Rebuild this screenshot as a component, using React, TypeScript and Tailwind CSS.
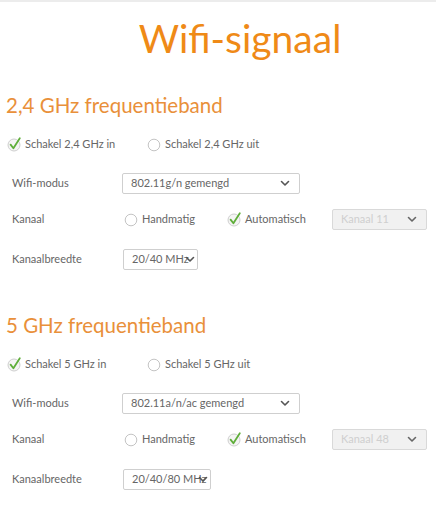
import { ReactNode } from "react";

function CheckIcon() {
  return (
    <svg width="16" height="16" viewBox="0 0 16 16" className="shrink-0">
      <circle cx="7" cy="9" r="6" fill="#f4f4f4" stroke="#cfcfcf" strokeWidth="1" />
      <path d="M3.6 8.6 L6.4 12.2 L12.8 2.2" fill="none" stroke="#5fae3a" strokeWidth="1.8" strokeLinecap="round" strokeLinejoin="round" />
    </svg>
  );
}

function RadioIcon() {
  return (
    <svg width="16" height="16" viewBox="0 0 16 16" className="shrink-0">
      <circle cx="7" cy="9" r="5.8" fill="#fff" stroke="#c4c4c4" strokeWidth="1" />
    </svg>
  );
}

function Chevron({ color = "#555" }: { color?: string }) {
  return (
    <svg width="10" height="7" viewBox="0 0 10 7" className="shrink-0">
      <path d="M1.5 1.5 L5 5 L8.5 1.5" fill="none" stroke={color} strokeWidth="1.6" strokeLinecap="round" strokeLinejoin="round" />
    </svg>
  );
}

function Option({ on, label, className = "" }: { on: boolean; label: string; className?: string }) {
  return (
    <div className={`flex items-center gap-[2px] ${className}`}>
      {on ? <CheckIcon /> : <RadioIcon />}
      <span>{label}</span>
    </div>
  );
}

// chevron sits over the text, like a native select that is too narrow
function Select({ value, width, disabled = false, tight = false }: { value: string; width: string; disabled?: boolean; tight?: boolean }) {
  return (
    <div
      className={`relative flex h-[21px] items-center overflow-hidden rounded-[2px] border pl-[8px] ${
        disabled ? "border-[#d9d9d9] bg-[#f1f1f1] text-[#cfcfcf]" : "border-[#cfcfcf] bg-white text-[#666]"
      } ${width}`}
    >
      <span className="whitespace-nowrap">{value}</span>
      <div className={`absolute top-[6px] ${tight ? "right-[2px]" : "right-[9px]"}`}>
        <Chevron color={disabled ? "#666" : "#555"} />
      </div>
    </div>
  );
}

function Row({ label, children, className = "" }: { label: string; children: ReactNode; className?: string }) {
  return (
    <div className={`flex h-[36px] items-center ${className}`}>
      <span className="w-[110px] shrink-0 pl-[12px]">{label}</span>
      {children}
    </div>
  );
}

function Band(props: { title: string; ghz: string; mode: string; channel: string; width: string; widthBox: string; className?: string }) {
  return (
    <section className={props.className}>
      <h2 className="pl-[6px] text-[20.5px] leading-[24px] text-[#e9903a]">{props.title}</h2>
      <div className="mt-[9px] flex h-[36px] items-center">
        <Option on label={`Schakel ${props.ghz} GHz in`} className="ml-[7px] w-[140px]" />
        <Option on={false} label={`Schakel ${props.ghz} GHz uit`} />
      </div>
      <Row label="Wifi-modus" className="mt-[3px]">
        <div className="ml-[12px]">
          <Select value={props.mode} width="w-[178px]" />
        </div>
      </Row>
      <Row label="Kanaal">
        <Option on={false} label="Handmatig" className="ml-[14px] w-[103px]" />
        <Option on label="Automatisch" className="w-[105px]" />
        <Select value={props.channel} width="w-[95px]" disabled />
      </Row>
      <Row label="Kanaalbreedte" className="mt-[4px]">
        <div className="ml-[13px]">
          <Select value={props.width} width={props.widthBox} tight />
        </div>
      </Row>
    </section>
  );
}

export default function App() {
  return (
    <div className="h-[506px] w-[436px] overflow-hidden bg-white text-[11px] text-[#666]" style={{ fontFamily: "Lato, 'Open Sans', sans-serif" }}>
      <div className="h-[2px] bg-[#ececec]" />
      <h1 className="mt-[16px] pl-[44px] text-center text-[39px] leading-[40px] text-[#ef8a17]">Wifi-signaal</h1>
      <Band
        className="mt-[35px]"
        title="2,4 GHz frequentieband"
        ghz="2,4"
        mode="802.11g/n gemengd"
        channel="Kanaal 11"
        width="20/40 MHz"
        widthBox="w-[75px]"
      />
      <Band
        className="mt-[36px]"
        title="5 GHz frequentieband"
        ghz="5"
        mode="802.11a/n/ac gemengd"
        channel="Kanaal 48"
        width="20/40/80 MHz"
        widthBox="w-[88px]"
      />
    </div>
  );
}
